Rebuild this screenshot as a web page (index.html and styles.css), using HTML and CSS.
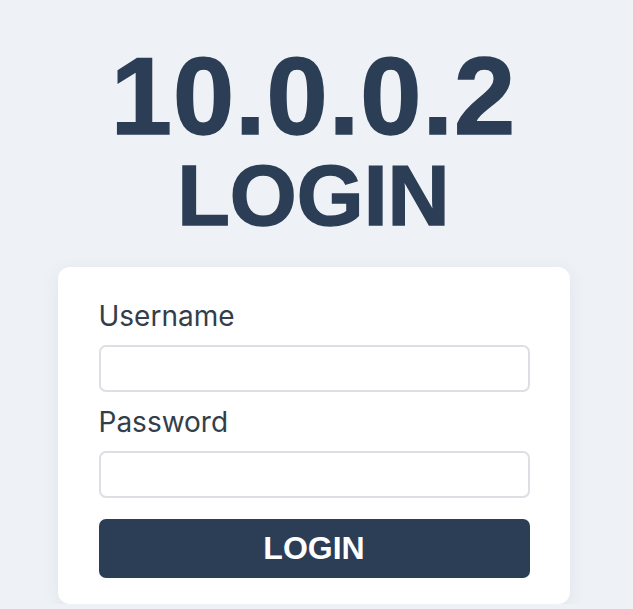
FILE: index.html
```html
<!DOCTYPE html>
<html>
<head>
<meta charset="utf-8">
<link rel="stylesheet" href="styles.css">
</head>
<body>
<header class="title">
  <div class="title-ip">10.0.0.2</div>
  <div class="title-login">LOGIN</div>
</header>
<form class="card">
  <label class="label" for="u">Username</label>
  <input class="field" id="u" type="text">
  <label class="label" for="p">Password</label>
  <input class="field" id="p" type="password">
  <button class="btn" type="button">LOGIN</button>
</form>
</body>
</html>
```
FILE: styles.css
```css
html, body {
  margin: 0;
  padding: 0;
}
body {
  background: #eef2f6;
  font-family: "Liberation Sans", Arial, sans-serif;
  color: #2c3e55;
  padding: 44px 6px 0 0;
}
.title {
  text-align: center;
  font-weight: 700;
  color: #2c3e55;
  margin-bottom: 24px;
  -webkit-text-stroke: 1.5px #2c3e55;
}
.title-ip {
  font-size: 110px;
  line-height: 104px;
  letter-spacing: 1px;
}
.title-login {
  font-size: 86px;
  line-height: 95px;
}
.card {
  width: 512px;
  box-sizing: border-box;
  margin: 0 auto;
  background: #ffffff;
  border-radius: 12px;
  box-shadow: 0 4px 18px rgba(40, 60, 90, 0.08);
  padding: 32px 40px 26px 41px;
  display: flex;
  flex-direction: column;
}
.label {
  font-family: Inter, "Liberation Sans", sans-serif;
  font-size: 28px;
  line-height: 34px;
  color: #333e4a;
  margin-bottom: 12px;
}
.field {
  height: 47px;
  box-sizing: border-box;
  border: 2px solid #dcdfe3;
  border-radius: 7px;
  background: #fff;
  margin: 0 0 13px 0;
  padding: 0 12px;
  font-size: 20px;
}
#p {
  margin-bottom: 21px;
}
.btn {
  height: 59px;
  border: none;
  border-radius: 7px;
  background: #2c3e55;
  color: #ffffff;
  font-family: "Liberation Sans", Arial, sans-serif;
  font-weight: 700;
  font-size: 32px;
  padding: 0;
}
```
